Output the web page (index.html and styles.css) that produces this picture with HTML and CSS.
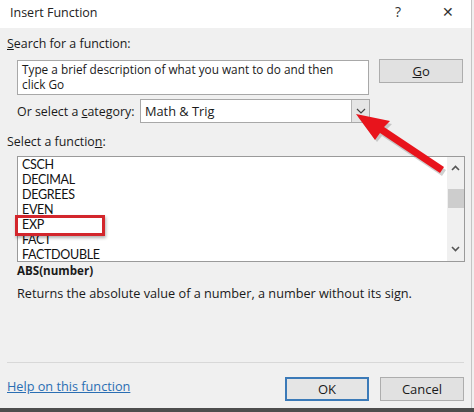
FILE: index.html
```html
<!DOCTYPE html>
<html>
<head>
<meta charset="utf-8">
<link rel="stylesheet" href="styles.css">
</head>
<body>
<div class="dialog">
  <div class="titlebar">
    <span class="title">Insert Function</span>
    <span class="tb-icons"><span class="help-q">?</span><span class="close-x">✕</span></span>
  </div>
  <div class="content">
    <div class="label first"><u>S</u>earch for a function:</div>
    <div class="search-row">
      <div class="textbox">Type a brief description of what you want to do and then click Go</div>
      <div class="btn go"><u>G</u>o</div>
    </div>
    <div class="cat-row">
      <span class="cat-label">Or select a <u>c</u>ategory:</span>
      <div class="select">
        <span class="select-val">Math &amp; Trig</span>
        <span class="select-btn"><svg width="10" height="6" viewBox="0 0 10 6"><path d="M1 1 L5 5 L9 1" fill="none" stroke="#444" stroke-width="1.2"/></svg></span>
      </div>
    </div>
    <div class="label fn-label">Select a functio<u>n</u>:</div>
    <div class="listbox">
      <ul class="items">
        <li>CSCH</li>
        <li>DECIMAL</li>
        <li>DEGREES</li>
        <li>EVEN</li>
        <li>EXP</li>
        <li>FACT</li>
        <li>FACTDOUBLE</li>
      </ul>
      <div class="scrollbar">
        <svg class="sb-up" width="9" height="6" viewBox="0 0 9 6"><path d="M1 5 L4.5 1.5 L8 5" fill="none" stroke="#555" stroke-width="1.6"/></svg>
        <div class="thumb"></div>
        <svg class="sb-down" width="9" height="6" viewBox="0 0 9 6"><path d="M1 1 L4.5 4.5 L8 1" fill="none" stroke="#555" stroke-width="1.6"/></svg>
      </div>
      <div class="highlight"></div>
    </div>
    <div class="syntax">ABS(number)</div>
    <div class="desc">Returns the absolute value of a number, a number without its sign.</div>
  </div>
  <div class="separator"></div>
  <div class="footer">
    <a class="helplink" href="#">Help on this function</a>
    <div class="btns">
      <div class="btn ok">OK</div>
      <div class="btn cancel">Cancel</div>
    </div>
  </div>
  <svg class="arrow" width="474" height="412" viewBox="0 0 474 412">
    <polygon points="358,117 392,124 386,130 446,170 442,176 382,136 377,142" fill="#777" opacity="0.35"/>
    <polygon points="356,114 390,121 384,127 444,167 440,173 380,133 375,140" fill="#e8141c"/>
  </svg>
</div>
<div class="bottomband"></div>
</body>
</html>
```

FILE: styles.css
```css
html, body {
  margin: 0;
  padding: 0;
}
body {
  width: 474px;
  height: 412px;
  background: #f0f0f0;
  font-family: "Open Sans", "Noto Sans", sans-serif;
  font-size: 12.4px;
  color: #1a1a1a;
  overflow: hidden;
  position: relative;
}
.dialog {
  width: 471px;
  height: 408px;
  border-right: 1px solid #c4c4c4;
  background: #f0f0f0;
  display: flex;
  flex-direction: column;
  position: relative;
}
.titlebar {
  height: 28px;
  background: #ffffff;
  display: flex;
  align-items: center;
  justify-content: space-between;
  padding: 0 0 0 10px;
  flex-shrink: 0;
}
.title {
  font-size: 12.5px;
  color: #222;
  margin-top: -3px;
}
.tb-icons {
  display: flex;
  align-items: center;
  margin-top: -5px;
}
.help-q {
  font-size: 14px;
  color: #333;
  margin-right: 41px;
}
.close-x {
  font-size: 14px;
  color: #333;
  margin-right: 17px;
}
.content {
  padding: 0 8px 0 7px;
  display: flex;
  flex-direction: column;
}
.label {
  line-height: 16px;
}
.label.first {
  margin-top: 8px;
}
.search-row {
  display: flex;
  align-items: flex-start;
  margin-top: 7px;
  margin-left: 10px;
}
.textbox {
  background: #fff;
  border: 1px solid #a8a8a8;
  margin-top: 1px;
  padding: 1px 16px 0 4px;
  box-sizing: border-box;
  width: 353px;
  height: 35px;
  font-size: 11.8px;
  line-height: 15px;
}
.btn {
  width: 84px;
  height: 24px;
  box-sizing: border-box;
  background: #e1e1e1;
  border: 1px solid #adadad;
  display: flex;
  align-items: center;
  justify-content: center;
  font-size: 13px;
}
.go {
  margin-left: 10px;
}
.cat-row {
  display: flex;
  align-items: center;
  margin-top: 4px;
  margin-left: 10px;
}
.cat-label {
  width: 123px;
}
.select {
  width: 230px;
  height: 24px;
  box-sizing: border-box;
  border: 1px solid #a8a8a8;
  background: #fff;
  display: flex;
  align-items: stretch;
}
.select-val {
  flex: 1;
  padding-left: 4px;
  display: flex;
  align-items: center;
  font-size: 12.8px;
}
.select-btn {
  width: 17px;
  background: #e5e5e5;
  border-left: 1px solid #b5b5b5;
  display: flex;
  align-items: center;
  justify-content: center;
}
.fn-label {
  margin-top: 11px;
}
.listbox {
  margin-top: 6px;
  margin-left: 10px;
  width: 448px;
  height: 106px;
  box-sizing: border-box;
  border: 1px solid #9a9a9a;
  background: #fff;
  display: flex;
  position: relative;
}
.items {
  list-style: none;
  margin: 0;
  padding: 0 0 0 4px;
  flex: 1;
  font-family: "Lato", "Open Sans", sans-serif;
  font-size: 12.5px;
  letter-spacing: -0.3px;
  line-height: 15px;
  color: #111;
}
.scrollbar {
  width: 17px;
  background: #f0f0f0;
  display: flex;
  flex-direction: column;
  align-items: center;
}
.sb-up {
  margin-top: 8px;
}
.thumb {
  width: 16px;
  height: 19px;
  background: #cdcdcd;
  margin-top: 18px;
}
.sb-down {
  margin-top: auto;
  margin-bottom: 9px;
}
.highlight {
  position: absolute;
  left: -3px;
  top: 58px;
  width: 90px;
  height: 21px;
  box-sizing: border-box;
  border: 3px solid #d3262c;
  box-shadow: 1px 2px 3px rgba(0,0,0,0.3);
}
.syntax {
  margin-left: 10px;
  margin-top: 1px;
  font-weight: bold;
  font-size: 11.6px;
  line-height: 15px;
}
.desc {
  margin-left: 10px;
  margin-top: 7px;
  line-height: 16px;
  font-size: 12.7px;
}
.separator {
  margin: 61px 7px 0 7px;
  height: 1px;
  background: #d8d8d8;
}
.footer {
  display: flex;
  align-items: center;
  justify-content: space-between;
  padding: 14px 7px 0 7px;
}
.helplink {
  color: #2a6eb3;
  text-decoration: underline;
  margin-top: -6px;
  font-size: 12.7px;
}
.btns {
  display: flex;
  gap: 11px;
}
.ok {
  border: 2px solid #3b7ab8;
  background: #e5e5e5;
}
.arrow {
  position: absolute;
  left: 0;
  top: 0;
  pointer-events: none;
}
.bottomband {
  height: 4px;
  background: #4d4d4d;
}
```
